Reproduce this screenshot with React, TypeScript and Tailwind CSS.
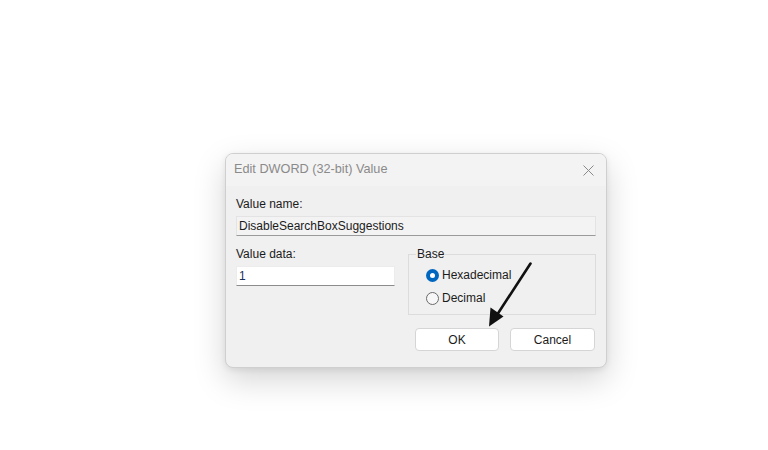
import React from 'react';

const font = { fontFamily: '"Liberation Sans", Arial, sans-serif' };

function Radio({ checked, label }: { checked: boolean; label: string }) {
  return (
    <div className="flex h-[16px] items-center gap-[3px]">
      {checked ? (
        <span className="flex h-[13px] w-[13px] items-center justify-center rounded-full bg-[#0067c0]">
          <span className="h-[5px] w-[5px] rounded-full bg-white" />
        </span>
      ) : (
        <span className="h-[13px] w-[13px] rounded-full border border-[#6a6a6a] bg-[#f7f7f7]" />
      )}
      <span className="text-[12px] leading-[16px] text-[#1b1b1b]">{label}</span>
    </div>
  );
}

export default function App() {
  return (
    <div className="relative h-[450px] w-[768px] overflow-hidden bg-white" style={font}>
      <div className="pl-[225px] pt-[153px]">
        <div className="w-[382px] overflow-hidden rounded-[8px] border border-[#cfcfcf] bg-[#f0f0f0] shadow-[0_12px_32px_rgba(0,0,0,0.17),0_2px_6px_rgba(0,0,0,0.08)]">
          <div className="flex h-[32px] items-center justify-between bg-[#f3f3f3] pl-[8px] pr-[12px]">
            <span className="text-[12.7px] text-[#8a8a8a]">Edit DWORD (32-bit) Value</span>
            <svg width="11" height="11" viewBox="0 0 11 11" className="mt-[1px]">
              <path d="M0.5 0.5 L10.5 10.5 M10.5 0.5 L0.5 10.5" stroke="#8a8a8a" strokeWidth="1" fill="none" />
            </svg>
          </div>

          <div className="px-[10px] pb-[16px] pt-[10px]">
            <div className="text-[12px] leading-[16px] text-[#1b1b1b]">Value name:</div>
            <div className="mt-[4px] flex h-[20px] w-[360px] items-center border border-[#e3e3e3] border-b-[#9a9a9a] bg-[#f3f3f3] px-[2px] text-[12px] text-[#1b1b1b]">
              DisableSearchBoxSuggestions
            </div>

            <div className="mt-[10px] flex gap-[13px]">
              <div className="w-[159px]">
                <div className="text-[12px] leading-[16px] text-[#1b1b1b]">Value data:</div>
                <div className="mt-[4px] flex h-[20px] items-center border border-[#ececec] border-b-[#8c8c8c] bg-white px-[2px] text-[12px] text-[#1c2f5a]">
                  1
                </div>
              </div>

              <fieldset className="h-[69px] w-[188px] border border-[#dcdcdc] pl-[17px]">
                <legend className="-ml-[10px] px-[1px] text-[12px] leading-[16px] text-[#1b1b1b]">Base</legend>
                <div className="mt-[5px] flex flex-col gap-[7px]">
                  <Radio checked label="Hexadecimal" />
                  <Radio checked={false} label="Decimal" />
                </div>
              </fieldset>
            </div>

            <div className="mt-[13px] flex justify-end gap-[11px] pr-[1px]">
              <button className="h-[23px] w-[84px] rounded-[4px] border border-[#d5d5d5] bg-white text-[12px] text-[#1b1b1b]">
                OK
              </button>
              <button className="h-[23px] w-[85px] rounded-[4px] border border-[#d5d5d5] bg-white text-[12px] text-[#1b1b1b]">
                Cancel
              </button>
            </div>
          </div>
        </div>
      </div>

      <svg className="absolute left-[480px] top-[258px]" width="60" height="75" viewBox="480 258 60 75">
        <path d="M530.5 263.5 L495 318" stroke="#111" strokeWidth="2.6" strokeLinecap="round" fill="none" />
        <path d="M489 326.5 L490.5 307.5 L503.5 316.5 Z" fill="#111" />
      </svg>
    </div>
  );
}
